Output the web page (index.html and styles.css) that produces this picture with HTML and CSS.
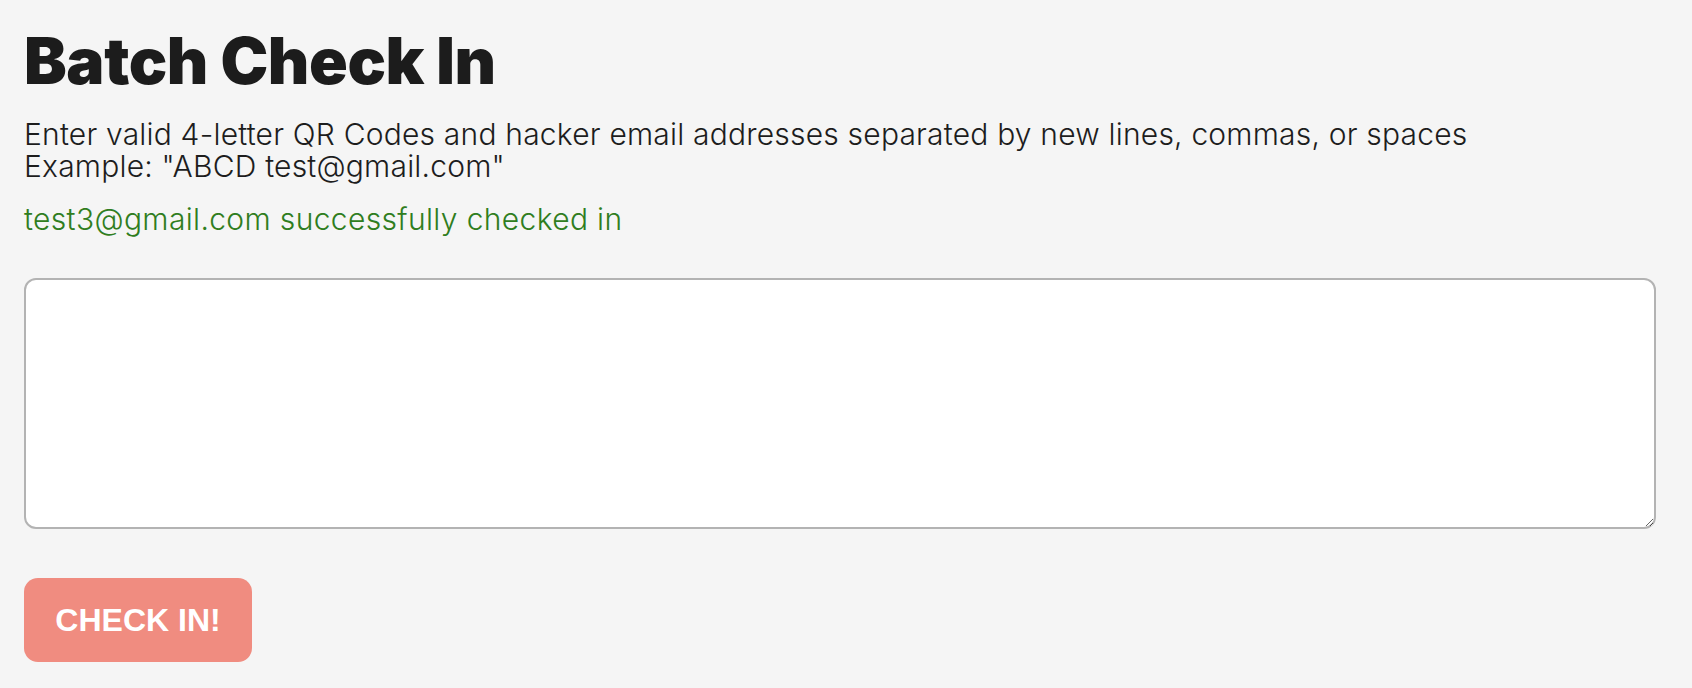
FILE: index.html
```html
<!DOCTYPE html>
<html lang="en">
<head>
<meta charset="utf-8">
<title>Batch Check In</title>
<link rel="stylesheet" href="styles.css">
</head>
<body>
<main class="page">
  <h1 class="title">Batch Check In</h1>
  <p class="intro">Enter valid 4-letter QR Codes and hacker email addresses separated by new lines, commas, or spaces<br>Example: "ABCD test@gmail.com"</p>
  <p class="status">test3@gmail.com successfully checked in</p>
  <textarea class="codes"></textarea>
  <button class="submit" type="button">CHECK IN!</button>
</main>
</body>
</html>
```
FILE: styles.css
```css
html, body {
  margin: 0;
  padding: 0;
  background: #f5f5f5;
}
.page {
  padding: 22px 36px 0 24px;
  display: flex;
  flex-direction: column;
  align-items: flex-start;
  font-family: Inter, "Noto Sans", sans-serif;
  color: #1d1d1d;
}
.title {
  margin: 0;
  font-size: 64px;
  font-weight: 900;
  line-height: 77px;
  letter-spacing: -0.4px;
  color: #1c1c1c;
}
.intro {
  margin: 19px 0 0;
  font-size: 30px;
  font-weight: 300;
  line-height: 32px;
  letter-spacing: 0.2px;
}
.status {
  margin: 21px 0 0;
  font-size: 30px;
  font-weight: 300;
  line-height: 32px;
  letter-spacing: 0.35px;
  color: #2f7d20;
}
.codes {
  box-sizing: border-box;
  margin-top: 43px;
  width: 100%;
  height: 251px;
  border: 2px solid #b3b3b3;
  border-radius: 12px;
  background: #fff;
}
.submit {
  margin-top: 49px;
  width: 228px;
  height: 84px;
  border: none;
  border-radius: 14px;
  background: #f08c80;
  color: #fff;
  font-family: "Liberation Sans", Arial, sans-serif;
  font-weight: 700;
  font-size: 32px;
}
```
